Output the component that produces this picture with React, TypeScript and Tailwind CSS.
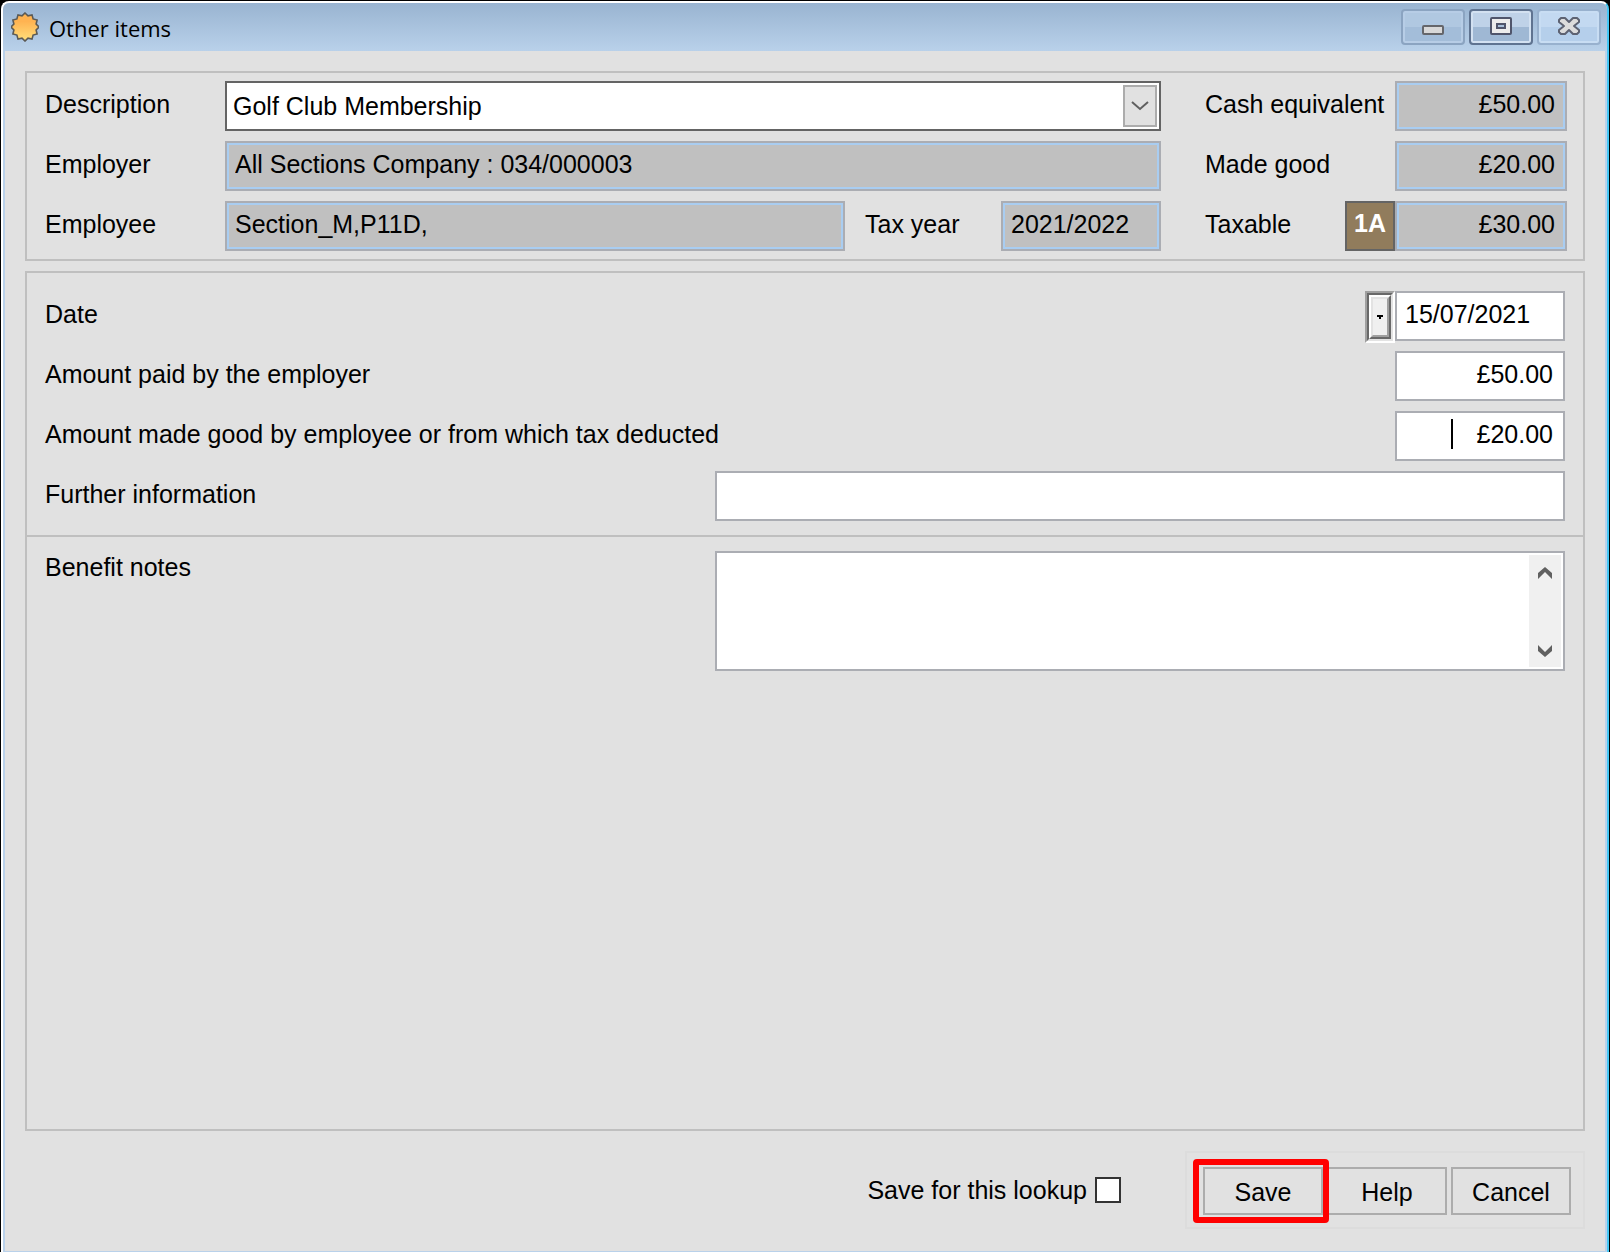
import { useState } from "react";

type FieldProps = {
    id: string;
    label: string;
    value: string;
    badge?: string;
};

const LABEL = "pb-1 leading-8 whitespace-nowrap";
const READONLY =
    "h-[50px] min-w-0 border-2 border-[#abadb3] bg-[#c0c0c0] px-2 pb-1 outline-2 -outline-offset-4 outline-[#a9cdf1]";
const EDITABLE = "h-[50px] min-w-0 border-2 border-[#abadb3] bg-white px-2 pb-1 outline-none";
const WINDOW_BUTTON =
    "flex h-9 w-16 items-center justify-center rounded-sm border-2 bg-linear-to-b pb-0.5 inset-ring-2";
const BUTTON = "h-12 w-[120px] border-2 border-[#acacac] pt-1";

// 12 spikes, alternating outer and inner radius
const SUN_POINTS = Array.from({ length: 24 }, (_, i) => {
    const radius = i % 2 === 0 ? 14 : 11.5;
    const angle = (i * Math.PI) / 12 - Math.PI / 2;
    return `${(14 + radius * Math.cos(angle)).toFixed(1)},${(15 + radius * Math.sin(angle)).toFixed(1)}`;
}).join(" ");

const SunIcon = () => (
    <svg width="28" height="30" viewBox="0 0 28 30" aria-hidden="true">
        <defs>
            <linearGradient id="sun" x1="0" y1="0" x2="0" y2="1">
                <stop offset="0.3" stopColor="#ffb351" />
                <stop offset="1" stopColor="#ffe07c" />
            </linearGradient>
        </defs>
        <polygon points={SUN_POINTS} fill="url(#sun)" stroke="#5b5a55" strokeWidth="1.6" />
    </svg>
);

const MinimizeIcon = () => (
    <svg width="22" height="18" viewBox="0 0 22 18" aria-hidden="true">
        <rect x="1" y="9" width="20" height="8" rx="1" fill="#d8d8d8" stroke="#65666a" strokeWidth="2" />
    </svg>
);

const MaximizeIcon = () => (
    <svg width="22" height="18" viewBox="0 0 22 18" aria-hidden="true">
        <rect x="1" y="1" width="20" height="16" rx="1" fill="#ececec" stroke="#50556b" strokeWidth="2" />
        <rect x="7" y="7" width="8" height="4" fill="#a9c0da" stroke="#50556b" strokeWidth="2" />
    </svg>
);

const CloseIcon = () => (
    <svg width="22" height="18" viewBox="0 0 22 18" aria-hidden="true">
        <path
            d="M3 1h4l4 4 4-4h4l2 2v2l-5 4 5 4v2l-2 2h-4l-4-4-4 4H3l-2-2v-2l5-4-5-4V3z"
            fill="#dcdcdc"
            stroke="#5d6272"
            strokeWidth="2"
            strokeLinejoin="round"
        />
    </svg>
);

const TitleBar = () => (
    <header className="flex h-12 items-center bg-linear-to-b from-[#99b4d1] to-[#b9d1ea] pr-1.5 pl-2">
        <SunIcon />
        <h1 className="ml-2.5 flex-1 pt-0.5 font-['Open_Sans',sans-serif] text-[22px] leading-8">Other items</h1>
        <div className="flex gap-1">
            <button
                type="button"
                aria-label="Minimize"
                className={`${WINDOW_BUTTON} border-[#8ba4c1] from-[#b0c8e1] from-50% to-[#a3bdd9] to-50% inset-ring-[#b7cde6]`}
            >
                <MinimizeIcon />
            </button>
            <button
                type="button"
                aria-label="Maximize"
                className={`${WINDOW_BUTTON} border-[#5f7390] from-[#bfd2e8] from-50% to-[#9fb8d4] to-50% inset-ring-[#d3e1f1]`}
            >
                <MaximizeIcon />
            </button>
            <button
                type="button"
                aria-label="Close"
                className={`${WINDOW_BUTTON} border-[#98b1ce] from-[#c3d9f1] from-50% to-[#b5cfeb] to-50% inset-ring-[#c8ddf3]`}
            >
                <CloseIcon />
            </button>
        </div>
    </header>
);

const Total = ({ id, label, value, badge }: FieldProps) => (
    <div className="flex items-center">
        <label htmlFor={id} className={`${LABEL} flex-1`}>
            {label}
        </label>
        {badge && (
            <span className="flex size-[50px] items-center justify-center border-2 border-[#646464] bg-[#917c5c] pb-1 font-bold text-white">
                {badge}
            </span>
        )}
        <input id={id} readOnly defaultValue={value} className={`${READONLY} w-[172px] pr-2.5 text-right`} />
    </div>
);

const DatePickerButton = () => (
    <span className="-mb-0.5 flex w-[30px] border-2 border-[#a0a0a0] border-r-white border-b-white">
        <button
            type="button"
            aria-label="Pick a date"
            className="flex flex-1 border-2 border-[#696969] border-r-[#e3e3e3] border-b-[#e3e3e3]"
        >
            <span className="flex h-full flex-1 border-2 border-white border-r-[#696969] border-b-[#696969]">
                <span className="flex flex-1 items-center justify-center border-2 border-[#e3e3e3] border-r-[#a0a0a0] border-b-[#a0a0a0] bg-[#f0f0f0]">
                    <svg width="6" height="4" viewBox="0 0 6 4" aria-hidden="true">
                        <path d="M0 0h6v2H4v2H2V2H0z" />
                    </svg>
                </span>
            </span>
        </button>
    </span>
);

const App = () => {
    const [lookup, setLookup] = useState(false);

    return (
        <div className="flex min-h-screen flex-col bg-black pt-px pr-px pl-px font-['Liberation_Sans',Arial,sans-serif] text-[25px] text-black">
            <div className="flex flex-1 flex-col overflow-hidden rounded-t-lg border-t-2 border-r-2 border-l-2 border-t-white border-r-[#45c8f5] border-l-white bg-[#e1e1e1]">
                <TitleBar />
                <form
                    className="flex flex-1 flex-col border-x-2 border-b border-[#b9d1ea] px-5 pt-5 pb-[22px]"
                    onSubmit={(e) => e.preventDefault()}
                >
                    {/* Benefit summary */}
                    <section className="flex gap-11 border-2 border-[#bfbfbf] py-2 pr-4 pl-[18px]">
                        <div className="grid flex-1 grid-cols-[180px_1fr] items-center gap-y-2.5">
                            <label htmlFor="description" className={LABEL}>
                                Description
                            </label>
                            <div className="relative">
                                <select
                                    id="description"
                                    className="h-[50px] w-full appearance-none border-2 border-[#646464] bg-white px-1.5 pt-0.5 outline-none"
                                >
                                    <option>Golf Club Membership</option>
                                </select>
                                <span className="pointer-events-none absolute top-1 right-1 flex h-[42px] w-[34px] items-center justify-center border-2 border-[#acacac] bg-[#e1e1e1]">
                                    <svg width="18" height="12" viewBox="0 0 18 12" fill="none" aria-hidden="true">
                                        <path d="M1 2l8 7 8-7" stroke="#606060" strokeWidth="2" />
                                    </svg>
                                </span>
                            </div>

                            <label htmlFor="employer" className={LABEL}>
                                Employer
                            </label>
                            <input
                                id="employer"
                                readOnly
                                defaultValue="All Sections Company : 034/000003"
                                className={READONLY}
                            />

                            <label htmlFor="employee" className={LABEL}>
                                Employee
                            </label>
                            <div className="flex items-center">
                                <input
                                    id="employee"
                                    readOnly
                                    defaultValue="Section_M,P11D,"
                                    className={`${READONLY} flex-1`}
                                />
                                <label htmlFor="tax-year" className={`${LABEL} w-[156px] pl-5`}>
                                    Tax year
                                </label>
                                <input
                                    id="tax-year"
                                    readOnly
                                    defaultValue="2021/2022"
                                    className={`${READONLY} w-40`}
                                />
                            </div>
                        </div>

                        <div className="flex w-[362px] flex-col gap-2.5">
                            <Total id="cash" label="Cash equivalent" value="£50.00" />
                            <Total id="made-good" label="Made good" value="£20.00" />
                            <Total id="taxable" label="Taxable" value="£30.00" badge="1A" />
                        </div>
                    </section>

                    {/* Benefit details */}
                    <section className="mt-2.5 flex flex-1 flex-col border-2 border-[#bfbfbf]">
                        <div className="flex flex-col gap-2.5 border-b-2 border-[#bfbfbf] px-[18px] pt-[18px] pb-3.5">
                            <div className="flex items-center justify-between">
                                <label htmlFor="date" className={LABEL}>
                                    Date
                                </label>
                                <div className="flex">
                                    <DatePickerButton />
                                    <input id="date" defaultValue="15/07/2021" className={`${EDITABLE} w-[170px]`} />
                                </div>
                            </div>
                            <div className="flex items-center justify-between">
                                <label htmlFor="paid" className={LABEL}>
                                    Amount paid by the employer
                                </label>
                                <input
                                    id="paid"
                                    defaultValue="£50.00"
                                    className={`${EDITABLE} w-[170px] pr-2.5 text-right`}
                                />
                            </div>
                            <div className="flex items-center justify-between">
                                <label htmlFor="deducted" className={LABEL}>
                                    Amount made good by employee or from which tax deducted
                                </label>
                                <div className="relative flex">
                                    <input
                                        id="deducted"
                                        defaultValue="£20.00"
                                        className={`${EDITABLE} w-[170px] pr-2.5 text-right`}
                                    />
                                    <span className="absolute top-2 right-28 h-[30px] w-0.5 bg-black" />
                                </div>
                            </div>
                            <div className="flex items-center">
                                <label htmlFor="further" className={`${LABEL} w-[670px]`}>
                                    Further information
                                </label>
                                <input id="further" className={`${EDITABLE} flex-1`} />
                            </div>
                        </div>

                        <div className="flex px-[18px] pt-3.5">
                            <label htmlFor="notes" className={`${LABEL} w-[670px]`}>
                                Benefit notes
                            </label>
                            <div className="flex h-[120px] flex-1 border-2 border-[#abadb3] bg-white p-0.5">
                                <textarea id="notes" className="min-w-0 flex-1 resize-none px-2 outline-none" />
                                <div className="flex w-8 flex-col items-center justify-between bg-[#f0f0f0] pt-3 pb-2.5">
                                    <svg width="14" height="12" viewBox="0 0 14 12" aria-hidden="true">
                                        <path d="M7 0l7 6v6L7 5l-7 7V6z" fill="#606060" />
                                    </svg>
                                    <svg width="14" height="12" viewBox="0 0 14 12" aria-hidden="true">
                                        <path d="M7 12L0 6V0l7 7 7-7v6z" fill="#606060" />
                                    </svg>
                                </div>
                            </div>
                        </div>
                    </section>

                    {/* Actions */}
                    <footer className="mt-5 flex items-center justify-end gap-16">
                        <label className="flex items-center gap-2">
                            <span className="leading-8">Save for this lookup</span>
                            <input
                                type="checkbox"
                                checked={lookup}
                                onChange={(e) => setLookup(e.target.checked)}
                                className="size-[26px] appearance-none border-2 border-[#333333] bg-white checked:bg-[#333333]"
                            />
                        </label>
                        <div className="flex gap-1 border-2 border-[#dcdcdc] pt-3.5 pr-3 pb-3 pl-4">
                            <div className="relative">
                                <button type="submit" className={BUTTON}>
                                    Save
                                </button>
                                {/* Highlight around the next step */}
                                <span className="pointer-events-none absolute -top-2 -right-1.5 -bottom-2 -left-2.5 z-10 rounded-sm border-6 border-[#ff0000]" />
                            </div>
                            <button type="button" className={BUTTON}>
                                Help
                            </button>
                            <button type="button" className={BUTTON}>
                                Cancel
                            </button>
                        </div>
                    </footer>
                </form>
            </div>
        </div>
    );
};

export default App;
